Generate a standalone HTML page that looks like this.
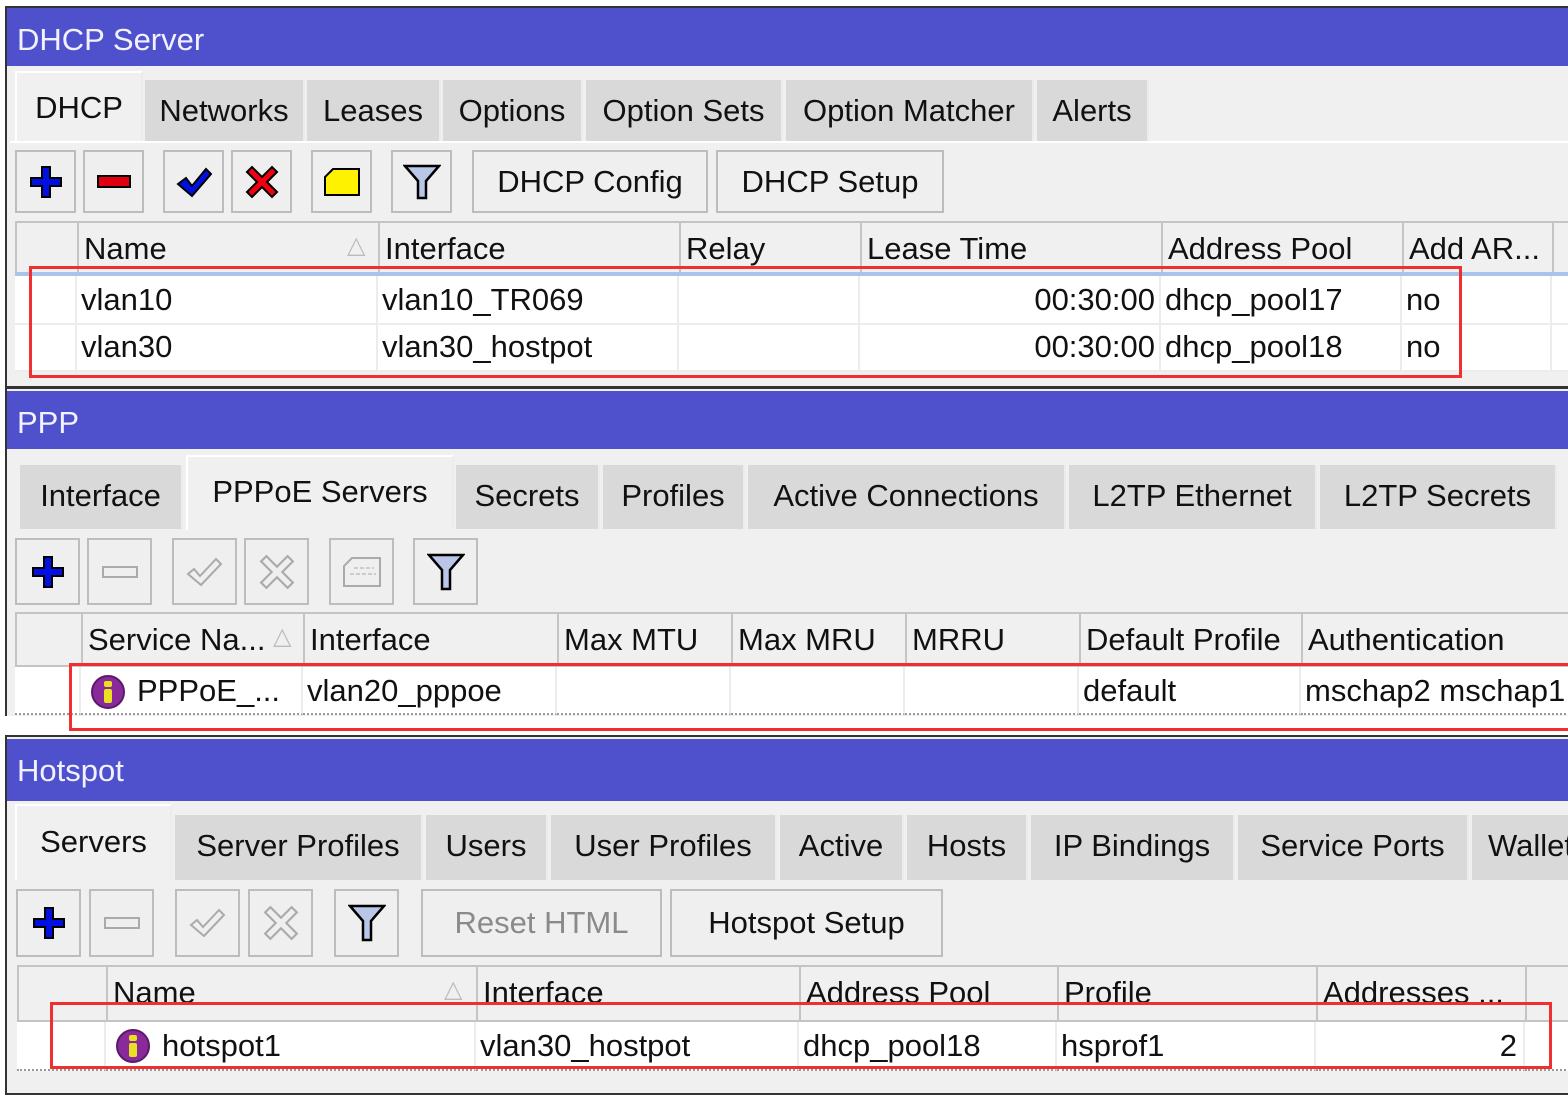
<!DOCTYPE html>
<html><head><meta charset="utf-8"><style>
*{box-sizing:border-box;margin:0;padding:0}
body{width:1568px;height:1080px;overflow:hidden;background:#fff;font-family:"Liberation Sans",sans-serif;color:#111;position:relative}
.a{position:absolute}
.panel{position:absolute;left:5px;right:-10px;background:#f0f0f0;border:2px solid #333;border-right:none}
.title{position:absolute;left:0;right:0;top:0;height:58px;background:#4f50cb;color:#f2f2ff;font-size:31px;padding:14px 0 0 10px}
.tab{position:absolute;background:#d9d9d9;font-size:31px;text-align:center;border-right:2px solid #ececec}
.tab.on{background:#f0f0f0;border-top:2px solid #fff;border-left:2px solid #fff}
.btn{position:absolute;border:2px solid #bdbdbd;background:#efefef;font-size:31px;text-align:center;display:flex;align-items:center;justify-content:center}
.hdr{position:absolute;border:2px solid #c4c4c4;background:#f0f0f0;font-size:31px;padding:8px 0 0 5px;border-right:none;white-space:nowrap;overflow:hidden}
.cell{position:absolute;background:#fff;font-size:31px;padding:6px 0 0 4px;border-right:2px solid #ececec;border-bottom:2px solid #ececec;white-space:nowrap;overflow:hidden}
.red{position:absolute;border:3px solid #f03030}
</style></head><body>

<!-- Panel 1 -->
<div class="panel" style="top:6px;height:382px">
<div class="title">DHCP Server</div>
</div>
<div class="tab on" style="left:15px;top:71px;width:128px;height:70px;padding-top:17px">DHCP</div>
<div class="tab" style="left:145px;top:80px;width:160px;height:61px;padding-top:13px">Networks</div>
<div class="tab" style="left:307px;top:80px;width:134px;height:61px;padding-top:13px">Leases</div>
<div class="tab" style="left:443px;top:80px;width:140px;height:61px;padding-top:13px">Options</div>
<div class="tab" style="left:586px;top:80px;width:197px;height:61px;padding-top:13px">Option Sets</div>
<div class="tab" style="left:786px;top:80px;width:248px;height:61px;padding-top:13px">Option Matcher</div>
<div class="tab" style="left:1037px;top:80px;width:112px;height:61px;padding-top:13px">Alerts</div>
<div class="a" style="left:10px;right:0;top:141px;height:2px;background:#fff"></div>

<div class="btn" style="left:15px;top:150px;width:61px;height:63px"><svg width="34" height="34" viewBox="0 0 34 34"><path d="M13 2h8v11h11v8H21v11h-8V21H2v-8h11z" fill="#0010e0" stroke="#000" stroke-width="2"/></svg></div>
<div class="btn" style="left:83px;top:150px;width:61px;height:63px"><svg width="34" height="14"><rect x="1" y="1" width="32" height="11" fill="#e00010" stroke="#000" stroke-width="2"/></svg></div>
<div class="btn" style="left:163px;top:150px;width:61px;height:63px"><svg width="36" height="32" viewBox="0 0 36 32"><path d="M2 18l8-6 6 8L30 3l5 5-19 22z" fill="#0010e0" stroke="#000" stroke-width="2"/></svg></div>
<div class="btn" style="left:231px;top:150px;width:61px;height:63px"><svg width="34" height="34" viewBox="0 0 34 34"><path d="M2 7l5-5 10 10L27 2l5 5-10 10 10 10-5 5-10-10L7 32l-5-5 10-10z" fill="#f00010" stroke="#000" stroke-width="2"/></svg></div>
<div class="btn" style="left:311px;top:150px;width:61px;height:63px"><svg width="38" height="30" viewBox="0 0 38 30"><path d="M10 2h26v26H2V10z" fill="#fff200" stroke="#000" stroke-width="2"/></svg></div>
<div class="btn" style="left:391px;top:150px;width:61px;height:63px"><svg width="38" height="38" viewBox="0 0 38 38"><path d="M2 3h34L23 18v17h-8V18z" fill="#b8c6e8" stroke="#000" stroke-width="2.5"/></svg></div>
<div class="btn" style="left:472px;top:150px;width:236px;height:63px">DHCP Config</div>
<div class="btn" style="left:716px;top:150px;width:228px;height:63px">DHCP Setup</div>

<div class="hdr" style="left:15px;top:221px;width:62px;height:53px"></div>
<div class="hdr" style="left:77px;top:221px;width:301px;height:53px">Name<span class="a" style="left:268px;top:8px;color:#bbb;font-size:24px">△</span></div>
<div class="hdr" style="left:378px;top:221px;width:301px;height:53px">Interface</div>
<div class="hdr" style="left:679px;top:221px;width:181px;height:53px">Relay</div>
<div class="hdr" style="left:860px;top:221px;width:301px;height:53px">Lease Time</div>
<div class="hdr" style="left:1161px;top:221px;width:241px;height:53px">Address Pool</div>
<div class="hdr" style="left:1402px;top:221px;width:150px;height:53px">Add AR...</div>
<div class="hdr" style="left:1552px;top:221px;width:30px;height:53px"></div>
<div class="a" style="left:15px;right:0;top:272px;height:4px;background:#a9c4e8"></div>
<div class="cell" style="left:15px;top:276px;width:62px;height:49px"></div>
<div class="cell" style="left:77px;top:276px;width:301px;height:49px">vlan10</div>
<div class="cell" style="left:378px;top:276px;width:301px;height:49px">vlan10_TR069</div>
<div class="cell" style="left:679px;top:276px;width:181px;height:49px"></div>
<div class="cell" style="left:860px;top:276px;width:301px;height:49px;text-align:right;padding-right:4px">00:30:00</div>
<div class="cell" style="left:1161px;top:276px;width:241px;height:49px">dhcp_pool17</div>
<div class="cell" style="left:1402px;top:276px;width:150px;height:49px">no</div>
<div class="cell" style="left:1552px;top:276px;width:30px;height:49px"></div>
<div class="cell" style="left:15px;top:325px;width:62px;height:47px"></div>
<div class="cell" style="left:77px;top:325px;width:301px;height:47px;padding-top:4px">vlan30</div>
<div class="cell" style="left:378px;top:325px;width:301px;height:47px;padding-top:4px">vlan30_hostpot</div>
<div class="cell" style="left:679px;top:325px;width:181px;height:47px"></div>
<div class="cell" style="left:860px;top:325px;width:301px;height:47px;text-align:right;padding:4px 4px 0 0">00:30:00</div>
<div class="cell" style="left:1161px;top:325px;width:241px;height:47px;padding-top:4px">dhcp_pool18</div>
<div class="cell" style="left:1402px;top:325px;width:150px;height:47px;padding-top:4px">no</div>
<div class="cell" style="left:1552px;top:325px;width:30px;height:47px"></div>
<div class="red" style="left:29px;top:266px;width:1433px;height:112px"></div>

<!-- Panel 2 -->
<div class="panel" style="top:387px;height:331px">
<div class="title" style="top:2px">PPP</div>
</div>
<div class="tab" style="left:20px;top:465px;width:163px;height:64px;padding-top:13px">Interface</div>
<div class="tab on" style="left:186px;top:455px;width:268px;height:75px;padding-top:17px">PPPoE Servers</div>
<div class="tab" style="left:456px;top:465px;width:144px;height:64px;padding-top:13px">Secrets</div>
<div class="tab" style="left:603px;top:465px;width:142px;height:64px;padding-top:13px">Profiles</div>
<div class="tab" style="left:748px;top:465px;width:318px;height:64px;padding-top:13px">Active Connections</div>
<div class="tab" style="left:1069px;top:465px;width:248px;height:64px;padding-top:13px">L2TP Ethernet</div>
<div class="tab" style="left:1320px;top:465px;width:237px;height:64px;padding-top:13px">L2TP Secrets</div>

<div class="btn" style="left:15px;top:538px;width:65px;height:67px"><svg width="34" height="34" viewBox="0 0 34 34"><path d="M13 2h8v11h11v8H21v11h-8V21H2v-8h11z" fill="#0010e0" stroke="#000" stroke-width="2"/></svg></div>
<div class="btn" style="left:87px;top:538px;width:65px;height:67px"><svg width="36" height="14"><rect x="1" y="2" width="34" height="10" fill="none" stroke="#aaa" stroke-width="2"/></svg></div>
<div class="btn" style="left:172px;top:538px;width:65px;height:67px"><svg width="38" height="32" viewBox="0 0 38 32"><path d="M2 18l6-5 6 7L30 3l5 5-20 21z" fill="none" stroke="#aaa" stroke-width="2"/></svg></div>
<div class="btn" style="left:244px;top:538px;width:65px;height:67px"><svg width="36" height="36" viewBox="0 0 34 34"><path d="M2 7l5-5 10 10L27 2l5 5-10 10 10 10-5 5-10-10L7 32l-5-5 10-10z" fill="none" stroke="#aaa" stroke-width="2"/></svg></div>
<div class="btn" style="left:329px;top:538px;width:65px;height:67px"><svg width="40" height="32" viewBox="0 0 40 32"><path d="M10 2h28v28H2V10z" fill="none" stroke="#aaa" stroke-width="2"/><path d="M12 12h20M8 18h26" stroke="#aaa" stroke-dasharray="4 2"/></svg></div>
<div class="btn" style="left:413px;top:538px;width:65px;height:67px"><svg width="38" height="40" viewBox="0 0 38 40"><path d="M2 3h34L23 18v19h-8V18z" fill="#b8c6e8" stroke="#000" stroke-width="2.5"/></svg></div>

<div class="hdr" style="left:15px;top:612px;width:66px;height:55px"></div>
<div class="hdr" style="left:81px;top:612px;width:222px;height:55px">Service Na...<span class="a" style="left:190px;top:8px;color:#bbb;font-size:24px">△</span></div>
<div class="hdr" style="left:303px;top:612px;width:254px;height:55px">Interface</div>
<div class="hdr" style="left:557px;top:612px;width:174px;height:55px">Max MTU</div>
<div class="hdr" style="left:731px;top:612px;width:174px;height:55px">Max MRU</div>
<div class="hdr" style="left:905px;top:612px;width:174px;height:55px">MRRU</div>
<div class="hdr" style="left:1079px;top:612px;width:222px;height:55px">Default Profile</div>
<div class="hdr" style="left:1301px;top:612px;width:280px;height:55px">Authentication</div>
<div class="cell" style="left:15px;top:667px;width:66px;height:48px;border-bottom:2px dotted #999"></div>
<div class="cell" style="left:81px;top:667px;width:222px;height:48px;padding-left:56px;border-bottom:2px dotted #999">PPPoE_...</div>
<svg class="a" style="left:90px;top:674px" width="36" height="36" viewBox="0 0 36 36"><circle cx="18" cy="18" r="16" fill="#8a2a9a" stroke="#5a1a6a" stroke-width="2"/><rect x="14" y="7" width="8" height="6" rx="2" fill="#e8e020"/><rect x="14" y="15" width="8" height="14" rx="2" fill="#e8e020"/></svg>
<div class="cell" style="left:303px;top:667px;width:254px;height:48px;border-bottom:2px dotted #999">vlan20_pppoe</div>
<div class="cell" style="left:557px;top:667px;width:174px;height:48px;border-bottom:2px dotted #999"></div>
<div class="cell" style="left:731px;top:667px;width:174px;height:48px;border-bottom:2px dotted #999"></div>
<div class="cell" style="left:905px;top:667px;width:174px;height:48px;border-bottom:2px dotted #999"></div>
<div class="cell" style="left:1079px;top:667px;width:222px;height:48px;border-bottom:2px dotted #999">default</div>
<div class="cell" style="left:1301px;top:667px;width:280px;height:48px;border-bottom:2px dotted #999">mschap2 mschap1</div>
<div class="a" style="left:0;width:70px;top:716px;height:20px;background:#fff"></div>
<div class="a" style="left:70px;right:0;top:716px;height:14px;background:#fff"></div>
<div class="red" style="left:69px;top:663px;width:1510px;height:68px"></div>

<!-- Panel 3 -->
<div class="panel" style="top:735px;height:360px">
<div class="title" style="top:2px;height:62px">Hotspot</div>
</div>
<div class="tab on" style="left:15px;top:804px;width:157px;height:76px;padding-top:18px">Servers</div>
<div class="tab" style="left:175px;top:815px;width:248px;height:65px;padding-top:13px">Server Profiles</div>
<div class="tab" style="left:426px;top:815px;width:122px;height:65px;padding-top:13px">Users</div>
<div class="tab" style="left:551px;top:815px;width:226px;height:65px;padding-top:13px">User Profiles</div>
<div class="tab" style="left:780px;top:815px;width:124px;height:65px;padding-top:13px">Active</div>
<div class="tab" style="left:907px;top:815px;width:121px;height:65px;padding-top:13px">Hosts</div>
<div class="tab" style="left:1031px;top:815px;width:204px;height:65px;padding-top:13px">IP Bindings</div>
<div class="tab" style="left:1238px;top:815px;width:231px;height:65px;padding-top:13px">Service Ports</div>
<div class="tab" style="left:1472px;top:815px;width:120px;height:65px;padding:13px 0 0 16px;text-align:left">Wallet</div>

<div class="btn" style="left:16px;top:889px;width:65px;height:68px"><svg width="34" height="34" viewBox="0 0 34 34"><path d="M13 2h8v11h11v8H21v11h-8V21H2v-8h11z" fill="#0010e0" stroke="#000" stroke-width="2"/></svg></div>
<div class="btn" style="left:89px;top:889px;width:65px;height:68px"><svg width="36" height="14"><rect x="1" y="2" width="34" height="10" fill="none" stroke="#aaa" stroke-width="2"/></svg></div>
<div class="btn" style="left:175px;top:889px;width:65px;height:68px"><svg width="38" height="32" viewBox="0 0 38 32"><path d="M2 18l6-5 6 7L30 3l5 5-20 21z" fill="none" stroke="#aaa" stroke-width="2"/></svg></div>
<div class="btn" style="left:248px;top:889px;width:65px;height:68px"><svg width="36" height="36" viewBox="0 0 34 34"><path d="M2 7l5-5 10 10L27 2l5 5-10 10 10 10-5 5-10-10L7 32l-5-5 10-10z" fill="none" stroke="#aaa" stroke-width="2"/></svg></div>
<div class="btn" style="left:334px;top:889px;width:65px;height:68px"><svg width="38" height="40" viewBox="0 0 38 40"><path d="M2 3h34L23 18v19h-8V18z" fill="#b8c6e8" stroke="#000" stroke-width="2.5"/></svg></div>
<div class="btn" style="left:421px;top:889px;width:241px;height:68px;color:#8a8a8a">Reset HTML</div>
<div class="btn" style="left:670px;top:889px;width:273px;height:68px">Hotspot Setup</div>

<div class="hdr" style="left:17px;top:965px;width:89px;height:57px"></div>
<div class="hdr" style="left:106px;top:965px;width:370px;height:57px">Name<span class="a" style="left:336px;top:8px;color:#bbb;font-size:24px">△</span></div>
<div class="hdr" style="left:476px;top:965px;width:323px;height:57px">Interface</div>
<div class="hdr" style="left:799px;top:965px;width:258px;height:57px">Address Pool</div>
<div class="hdr" style="left:1057px;top:965px;width:259px;height:57px">Profile</div>
<div class="hdr" style="left:1316px;top:965px;width:209px;height:57px">Addresses ...</div>
<div class="hdr" style="left:1525px;top:965px;width:60px;height:57px"></div>
<div class="cell" style="left:17px;top:1022px;width:89px;height:49px;border-bottom:2px dotted #999"></div>
<div class="cell" style="left:106px;top:1022px;width:370px;height:49px;padding-left:56px;border-bottom:2px dotted #999">hotspot1</div>
<svg class="a" style="left:115px;top:1028px" width="36" height="36" viewBox="0 0 36 36"><circle cx="18" cy="18" r="16" fill="#8a2a9a" stroke="#5a1a6a" stroke-width="2"/><rect x="14" y="7" width="8" height="6" rx="2" fill="#e8e020"/><rect x="14" y="15" width="8" height="14" rx="2" fill="#e8e020"/></svg>
<div class="cell" style="left:476px;top:1022px;width:323px;height:49px;border-bottom:2px dotted #999">vlan30_hostpot</div>
<div class="cell" style="left:799px;top:1022px;width:258px;height:49px;border-bottom:2px dotted #999">dhcp_pool18</div>
<div class="cell" style="left:1057px;top:1022px;width:259px;height:49px;border-bottom:2px dotted #999">hsprof1</div>
<div class="cell" style="left:1316px;top:1022px;width:209px;height:49px;text-align:right;padding-right:6px;border-bottom:2px dotted #999">2</div>
<div class="cell" style="left:1525px;top:1022px;width:60px;height:49px;border-bottom:2px dotted #999"></div>
<div class="red" style="left:50px;top:1002px;width:1502px;height:67px"></div>

</body></html>
